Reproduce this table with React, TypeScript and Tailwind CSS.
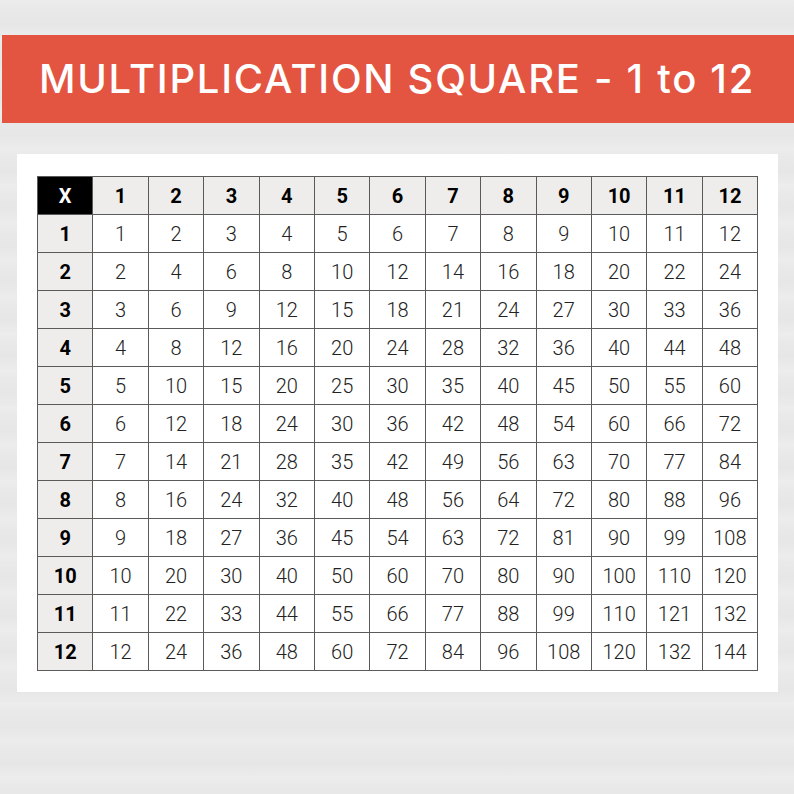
const nums = Array.from({ length: 12 }, (_, i) => i + 1);

export default function App() {
  return (
    <div
      className="w-[794px] h-[794px] overflow-hidden bg-[#e9e9e9] pt-[35px]"
      style={{
        backgroundImage:
          "repeating-linear-gradient(180deg, rgba(255,255,255,0.18) 0px, rgba(255,255,255,0) 9px, rgba(0,0,0,0.012) 23px, rgba(255,255,255,0.12) 37px)",
      }}
    >
      <div className="ml-[2px] h-[88px] bg-[#e35441] flex items-center pl-[37px]">
        <h1 className="text-white text-[40px] font-medium tracking-[1.7px] leading-none whitespace-nowrap font-['Inter',sans-serif]">
          MULTIPLICATION SQUARE - 1 to 12
        </h1>
      </div>
      <div className="mt-[31px] ml-[17px] w-[761px] h-[538px] bg-white pt-[22px] pl-[20px]">
        <table className="border-collapse font-['Roboto',sans-serif] text-[20px] text-[#222]">
          <thead>
            <tr>
              <th className="w-[55.4px] h-[38px] border border-[#5a5a5a] bg-black text-white font-bold">
                X
              </th>
              {nums.map((n) => (
                <th
                  key={n}
                  className="w-[55.4px] h-[38px] border border-[#5a5a5a] bg-[#efedec] text-black font-bold"
                >
                  {n}
                </th>
              ))}
            </tr>
          </thead>
          <tbody>
            {nums.map((r) => (
              <tr key={r}>
                <td className="w-[55.4px] h-[38px] border border-[#5a5a5a] bg-[#efedec] text-black font-bold text-center">
                  {r}
                </td>
                {nums.map((c) => (
                  <td
                    key={c}
                    className="w-[55.4px] h-[38px] border border-[#5a5a5a] text-center font-light p-0"
                  >
                    {r * c}
                  </td>
                ))}
              </tr>
            ))}
          </tbody>
        </table>
      </div>
    </div>
  );
}
